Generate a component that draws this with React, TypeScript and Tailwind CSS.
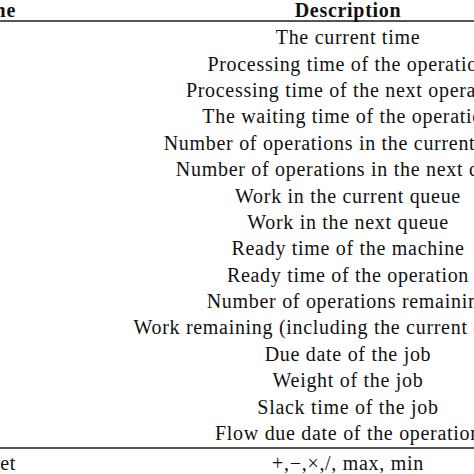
const rows = [
  'The current time',
  'Processing time of the operation',
  'Processing time of the next operation',
  'The waiting time of the operation',
  'Number of operations in the current queue',
  'Number of operations in the next queue',
  'Work in the current queue',
  'Work in the next queue',
  'Ready time of the machine',
  'Ready time of the operation',
  'Number of operations remaining',
  'Work remaining (including the current operation)',
  'Due date of the job',
  'Weight of the job',
  'Slack time of the job',
  'Flow due date of the operation',
];

export default function App() {
  return (
    <div
      className="w-[474px] h-[474px] overflow-hidden bg-white text-[#111] text-[20px] tracking-[0.7px]"
      style={{ fontFamily: '"Liberation Serif", "DejaVu Serif", serif' }}
    >
      <div className="-ml-[144px] w-[860px]">
        <div className="flex h-[22px] items-center border-b-2 border-[#555] font-bold leading-none">
          <div className="w-[160px] shrink-0 text-right whitespace-nowrap">Name</div>
          <div className="w-[664px] shrink-0 text-center">Description</div>
        </div>
        <div className="flex flex-col pt-[2px] pb-[1px] border-b-2 border-[#555]">
          {rows.map((r, i) => (
            <div key={i} className="flex h-[26.4px] items-center leading-none">
              <div className="w-[160px] shrink-0" />
              <div className="w-[664px] shrink-0 text-center whitespace-nowrap">{r}</div>
            </div>
          ))}
        </div>
        <div className="flex h-[28px] items-center leading-none">
          <div className="w-[160px] shrink-0 text-right whitespace-nowrap">Function set</div>
          <div className="w-[664px] shrink-0 text-center">+,−,×,/, max, min</div>
        </div>
      </div>
    </div>
  );
}
